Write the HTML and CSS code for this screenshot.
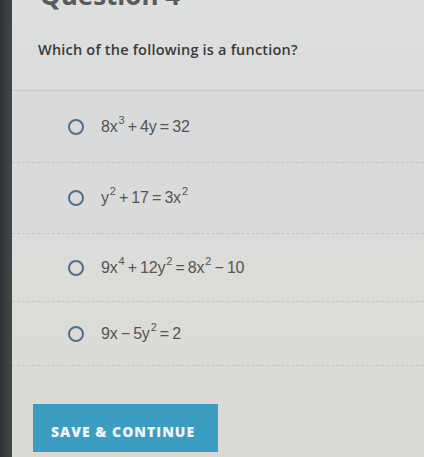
FILE: index.html
```html
<!DOCTYPE html>
<html>
<head>
<meta charset="utf-8">
<link rel="stylesheet" href="styles.css">
</head>
<body>
<div class="screen">
  <div class="bezel"></div>
  <main class="page">
    <h1 class="title">Question 4</h1>
    <p class="question">Which of the following is a function?</p>
    <ul class="options">
      <li class="option"><span class="radio"></span><span class="eq">8x<sup>3</sup> + 4y = 32</span></li>
      <li class="option"><span class="radio"></span><span class="eq">y<sup>2</sup> + 17 = 3x<sup>2</sup></span></li>
      <li class="option"><span class="radio"></span><span class="eq">9x<sup>4</sup> + 12y<sup>2</sup> = 8x<sup>2</sup> − 10</span></li>
      <li class="option"><span class="radio"></span><span class="eq">9x − 5y<sup>2</sup> = 2</span></li>
    </ul>
    <div class="actions"><button class="btn">SAVE &amp; CONTINUE</button></div>
  </main>
</div>
</body>
</html>
```
FILE: styles.css
```css
* { box-sizing: border-box; }
html, body { margin: 0; padding: 0; }
body { width: 424px; height: 457px; overflow: hidden; background: #dcdcda; font-family: "Liberation Sans", Arial, sans-serif; }
.screen { display: flex; height: 457px; }
.bezel { width: 12px; flex: none; background: linear-gradient(90deg, #2f3235, #44474a); }
.page { flex: 1; background: linear-gradient(180deg, #dedfdf 0%, #d8d9da 30%, #dcdcd9 60%, #d9d9d6 100%); overflow: hidden; }
.title { margin: -19px 0 0 28px; height: 28px; font-family: "Open Sans", sans-serif; font-weight: 700; font-size: 26px; line-height: 28px; color: #5a5a5a; }
.question { margin: 31px 0 0 26px; font-family: "Open Sans", sans-serif; font-weight: 600; font-size: 14.5px; line-height: 20px; color: #3a3a3a; letter-spacing: 0.2px; height: 50px; }
.options { list-style: none; margin: 0; padding: 0; border-top: 1px solid #c9c9c9; }
.option { height: 71px; display: flex; align-items: center; padding-left: 56px; border-bottom: 1px dashed #c4c4c4; }
.option:nth-child(1) { height: 72px; }
.option:nth-child(3) { height: 68px; }
.option:nth-child(4) { height: 64px; }
.radio { width: 16px; height: 16px; border: 2px solid #4f6f8c; border-radius: 50%; flex: none; }
.eq { margin-left: 17px; font-size: 16px; color: #555; letter-spacing: -0.2px; word-spacing: -1px; }
.eq sup { font-size: 11px; vertical-align: 8px; line-height: 0; margin-left: 1px; }
.actions { padding: 38px 0 0 21px; }
.btn { width: 185px; height: 48px; border: none; background: #3a9dc1; color: #f2f6f8; font-family: "Open Sans", sans-serif; font-weight: 800; font-size: 14px; letter-spacing: 1px; text-align: left; padding: 6px 0 0 18px; }
```
